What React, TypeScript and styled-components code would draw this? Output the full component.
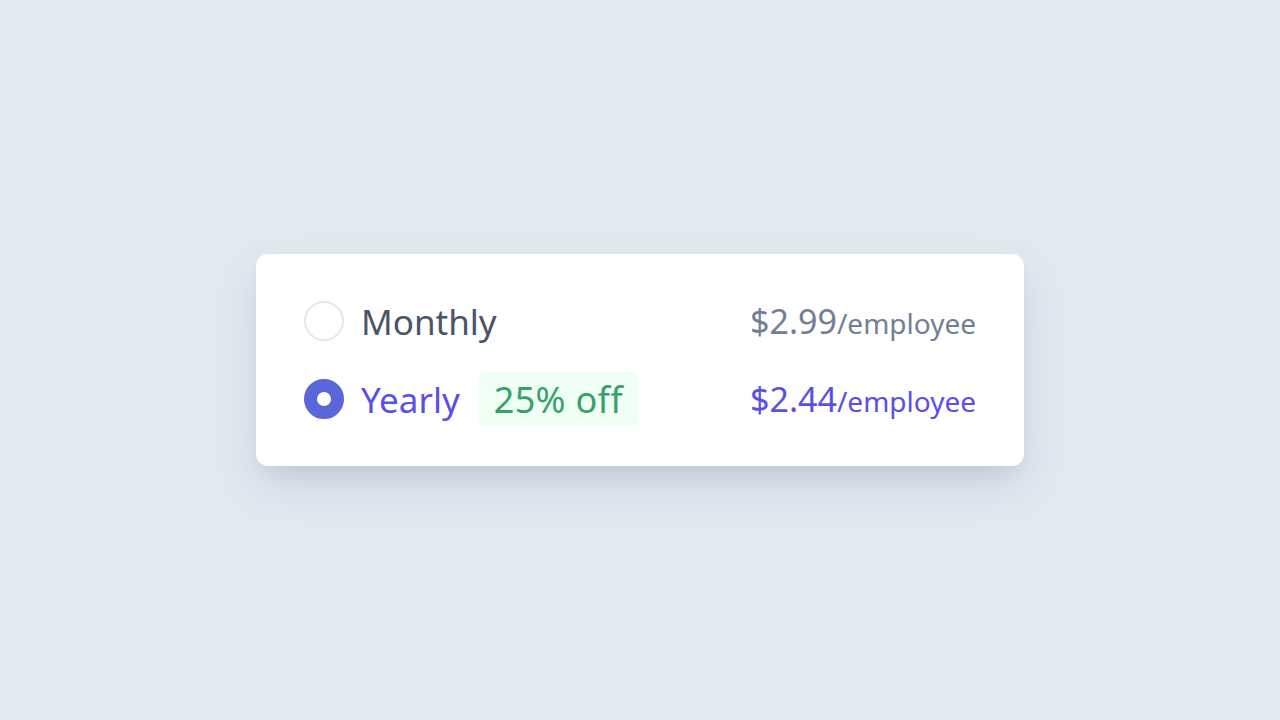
import React from 'react';
import styled, { createGlobalStyle } from 'styled-components';

const GlobalStyle = createGlobalStyle`
  html, body {
    margin: 0;
    padding: 0;
    background: #e2e8f0;
    font-family: 'Noto Sans', 'Open Sans', sans-serif;
  }
`;

const S = {
  Page: styled.div`
    display: flex;
    align-items: center;
    justify-content: center;
    width: 1280px;
    height: 720px;
  `,
  Card: styled.div`
    display: flex;
    flex-direction: column;
    gap: 24px;
    box-sizing: border-box;
    width: 768px;
    padding: 40px 48px 40px 48px;
    border-radius: 12px;
    background: #fff;
    box-shadow: 0 20px 40px -8px rgba(100, 116, 139, 0.25), 0 8px 16px -4px rgba(100, 116, 139, 0.08);
  `,
  Row: styled.div`
    display: flex;
    align-items: center;
    height: 54px;
  `,
  Radio: styled.div<{ $checked: boolean }>`
    display: flex;
    align-items: center;
    justify-content: center;
    box-sizing: border-box;
    width: 40px;
    height: 40px;
    flex-shrink: 0;
    border-radius: 50%;
    border: 2px solid ${p => (p.$checked ? '#5a67d8' : '#e2e8f0')};
    background: ${p => (p.$checked ? '#5a67d8' : '#fff')};

    &::after {
      content: '';
      display: ${p => (p.$checked ? 'block' : 'none')};
      width: 14px;
      height: 14px;
      border-radius: 50%;
      background: #fff;
    }
  `,
  Label: styled.span<{ $active: boolean }>`
    margin-left: 17px;
    font-size: 35px;
    color: ${p => (p.$active ? '#5a4fe8' : '#4a5568')};
  `,
  Badge: styled.span`
    display: flex;
    align-items: center;
    height: 54px;
    margin-left: 18px;
    padding: 0 15px 0 16px;
    border-radius: 6px;
    background: #f0fff4;
    color: #38a169;
    font-size: 36px;
    letter-spacing: 0.3px;
  `,
  Price: styled.div<{ $active: boolean }>`
    margin-left: auto;
    color: ${p => (p.$active ? '#5a4fe8' : '#718096')};
    font-size: 34px;
    white-space: nowrap;
  `,
  Unit: styled.span`
    font-size: 28px;
  `,
};

interface Plan {
  id: string;
  label: string;
  price: string;
  badge?: string;
  checked: boolean;
}

const plans: Plan[] = [
  { id: 'monthly', label: 'Monthly', price: '$2.99', checked: false },
  { id: 'yearly', label: 'Yearly', price: '$2.44', badge: '25% off', checked: true },
];

const App: React.FC = () => (
  <>
    <GlobalStyle />
    <S.Page>
      <S.Card>
        {plans.map(plan => (
          <S.Row key={plan.id}>
            <S.Radio $checked={plan.checked} />
            <S.Label $active={plan.checked}>{plan.label}</S.Label>
            {plan.badge && <S.Badge>{plan.badge}</S.Badge>}
            <S.Price $active={plan.checked}>
              {plan.price}
              <S.Unit>/employee</S.Unit>
            </S.Price>
          </S.Row>
        ))}
      </S.Card>
    </S.Page>
  </>
);

export default App;
